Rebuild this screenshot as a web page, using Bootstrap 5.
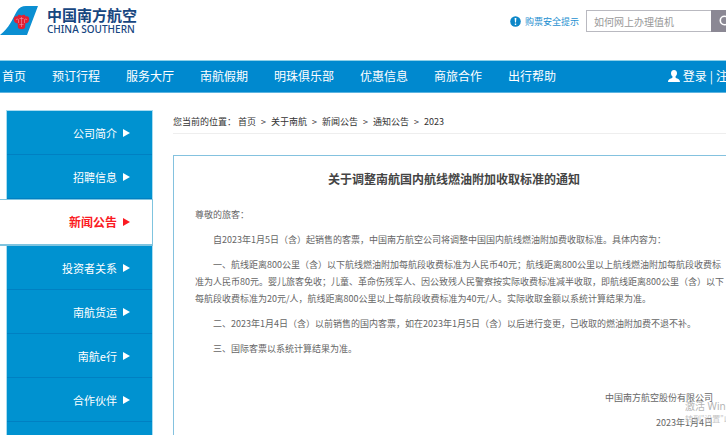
<!DOCTYPE html>
<html lang="zh-CN">
<head>
<meta charset="utf-8">
<meta name="viewport" content="width=device-width, initial-scale=1">
<title>中国南方航空 - 通知公告</title>
<link href="https://cdn.jsdelivr.net/npm/bootstrap@5.3.0/dist/css/bootstrap.min.css" rel="stylesheet">
<style>
  body { font-family: "Noto Sans CJK SC", sans-serif; font-size: 9px; line-height: 17px; color: #666; background: #fff; }
  .page-shell { min-height: 100vh; }
  a { text-decoration: none; }
  .site-head { height: 60px; }
  .brand-link { color: #16467f; padding-top: 6px; gap: 9px; }
  .brand-cn { font-size: 15px; line-height: 18px; font-weight: 700; }
  .brand-en { font-family: "Noto Sans", sans-serif; font-size: 10px; line-height: 11px; font-weight: 500; }
  .safe-tip { color: #1c8fd0; gap: 4px; margin-right: 7px; }
  .head-tools { padding-top: 10px; margin-right: -12px; }
  .search-box { width: 125px; height: 22px; border: 1px solid #b9b9c0; border-right: 0; padding: 0 7px; font-size: 10px; color: #777; }
  .search-box::placeholder { color: #999; }
  .search-btn { width: 27px; height: 22px; background: #8b8894; border: 0; }
  .main-nav { height: 33px; background: #0089cf; border-top: 1px solid #8fd0e8; border-bottom: 1px solid #5db4e0; font-size: 12px; line-height: 16px; padding: 0 0 2px 2px; gap: 26px; }
  .main-nav a { color: #fff; }
  .account { gap: 3px; margin-right: -14px; }
  .body-row { padding-top: 17px; flex: 1; }
  .side-menu { width: 153px; padding-left: 6px; margin-right: 20px; }
  .side-menu a { height: 44px; padding-right: 22px; gap: 6px; background: #0092d0; color: #fff; font-family: "Noto Sans", "Noto Sans CJK SC", sans-serif; font-size: 11px; border: 1px solid #a9dcf0; border-width: 0 1px; box-shadow: inset 0 -1px #0080c2; }
  .side-menu a:first-child { height: 45px; border-top-width: 1px; }
  .side-menu .current { height: 47px; margin-left: -7px; background: #fff; color: #fb1a22; font-size: 12px; font-weight: 700; border: 1px solid #7fc4df; border-width: 1px 1px 2px; box-shadow: none; }
  .side-rest { background: #0092d0; border: 1px solid #a9dcf0; border-width: 0 1px; }
  .trail { color: #333; padding: 3px 0 3px; border-bottom: 1px solid #eee; gap: 5px; }
  .trail a { color: #333; }
  .trail-label { margin-right: -3px; }
  .notice { flex: 1; margin-top: 21px; border: 1px solid #84c2df; border-width: 1px 0 0 1px; padding: 14px 0 0 21px; }
  .notice h1 { font-size: 12px; line-height: 18px; font-weight: 700; color: #444; margin: 0 13px 18px 0; }
  .notice p { margin: 0 0 8px; }
  .para { text-indent: 18px; }
  .sign { padding: 24px 13px 0 0; }
  .os-note { right: 0; bottom: 10px; width: 41px; height: 25px; color: #b5b5b5; font-family: "Noto Sans", "Noto Sans CJK SC", sans-serif; font-size: 10px; line-height: 13px; white-space: nowrap; }
  .os-note small { font-size: 8px; line-height: 11px; color: #c4c4c4; }
</style>
<script src="https://cdn.jsdelivr.net/npm/bootstrap@5.3.0/dist/js/bootstrap.bundle.min.js"></script>
</head>
<body>
<div class="page-shell d-flex flex-column overflow-hidden position-relative">
  <header class="site-head d-flex justify-content-between align-items-start">
    <a class="brand-link d-flex" href="#">
      <svg width="38" height="30" viewBox="0 0 38 30" aria-hidden="true">
        <path d="M0 29C9 22 12 14 17 5Q20 0 26 0H38L27 29Z" fill="#0b8fd2"/>
        <path d="M14 14.500C13 11 15.500 9.500 17.500 10.500C17.500 8.500 19.500 8 21.500 9.500C23.500 8 25.500 8.500 25.500 10.500C27.500 9.500 30 11 29 14.500C28.500 17 26.500 17.500 25.500 17L25 22Q21.500 24.500 18 22L17.500 17C16.500 17.500 14.500 17 14 14.500Z" fill="#e41f32"/>
        <path d="M16 14Q16.500 12 18.500 13.500V17M27 14Q26.500 12 24.500 13.500V17M21.500 11V21M19.500 12.500H23.500M19.500 18.500H23.500" fill="none" stroke="#e9a0b0" stroke-width=".6"/>
      </svg>
      <span class="d-flex flex-column"><span class="brand-cn">中国南方航空</span><span class="brand-en">CHINA SOUTHERN</span></span>
    </a>
    <form class="head-tools d-flex align-items-center">
      <a class="safe-tip d-flex align-items-center" href="#">
        <svg width="11" height="11" viewBox="0 0 11 11" aria-hidden="true"><circle cx="5.500" cy="5.500" r="5.300" fill="#0d87c8"/><path d="M4.600 2H6.400L6 6.500H5ZM4.800 7.500H6.200V9H4.800Z" fill="#fff"/></svg>
        购票安全提示</a>
      <input class="search-box" type="text" placeholder="如何网上办理值机" aria-label="搜索">
      <button class="search-btn p-0 ps-2 text-start d-flex align-items-center" type="button" aria-label="搜索按钮">
        <svg width="13" height="13" viewBox="0 0 13 13" fill="none" stroke="#fff" stroke-width="1.600" aria-hidden="true"><circle cx="5.500" cy="5.500" r="4.200"/><path d="M8.500 8.500L12 12"/></svg>
      </button>
    </form>
  </header>

  <nav class="main-nav d-flex align-items-center text-nowrap">
    <a href="#">首页</a><a href="#">预订行程</a><a href="#">服务大厅</a><a href="#">南航假期</a><a href="#">明珠俱乐部</a><a href="#">优惠信息</a><a href="#">商旅合作</a><a href="#">出行帮助</a>
    <div class="account d-flex align-items-center ms-auto text-white">
      <svg width="12" height="12" viewBox="0 0 12 12" fill="#fff" aria-hidden="true"><path d="M6 0C8 0 9 1.500 9 3.300S8 6 7.500 6.600V7.500C8 8.500 12 8.500 12 12H0C0 8.500 4 8.500 4.500 7.500V6.600C4 6 3 5.200 3 3.300S4 0 6 0Z"/></svg>
      <a href="#">登录</a><span>|</span><a href="#">注册</a>
    </div>
  </nav>

  <div class="body-row d-flex">
    <aside class="side-menu d-flex flex-column flex-shrink-0">
      <a class="d-flex align-items-center justify-content-end" href="#">公司简介<svg width="7" height="8" viewBox="0 0 7 8" fill="currentColor" aria-hidden="true"><path d="M0 0L7 4L0 8Z"/></svg></a>
      <a class="d-flex align-items-center justify-content-end" href="#">招聘信息<svg width="7" height="8" viewBox="0 0 7 8" fill="currentColor" aria-hidden="true"><path d="M0 0L7 4L0 8Z"/></svg></a>
      <a class="current d-flex align-items-center justify-content-end" href="#">新闻公告<svg width="7" height="8" viewBox="0 0 7 8" fill="currentColor" aria-hidden="true"><path d="M0 0L7 4L0 8Z"/></svg></a>
      <a class="d-flex align-items-center justify-content-end" href="#">投资者关系<svg width="7" height="8" viewBox="0 0 7 8" fill="currentColor" aria-hidden="true"><path d="M0 0L7 4L0 8Z"/></svg></a>
      <a class="d-flex align-items-center justify-content-end" href="#">南航货运<svg width="7" height="8" viewBox="0 0 7 8" fill="currentColor" aria-hidden="true"><path d="M0 0L7 4L0 8Z"/></svg></a>
      <a class="d-flex align-items-center justify-content-end" href="#">南航e行<svg width="7" height="8" viewBox="0 0 7 8" fill="currentColor" aria-hidden="true"><path d="M0 0L7 4L0 8Z"/></svg></a>
      <a class="d-flex align-items-center justify-content-end" href="#">合作伙伴<svg width="7" height="8" viewBox="0 0 7 8" fill="currentColor" aria-hidden="true"><path d="M0 0L7 4L0 8Z"/></svg></a>
      <div class="side-rest flex-fill"></div>
    </aside>

    <main class="flex-fill d-flex flex-column">
      <nav class="trail d-flex" aria-label="当前位置">
        <span class="trail-label">您当前的位置：</span>
        <a href="#">首页</a><span>&gt;</span><a href="#">关于南航</a><span>&gt;</span><a href="#">新闻公告</a><span>&gt;</span><a href="#">通知公告</a><span>&gt;</span><a href="#">2023</a>
      </nav>
      <article class="notice">
        <h1 class="text-center">关于调整南航国内航线燃油附加收取标准的通知</h1>
        <p>尊敬的旅客：</p>
        <p class="para">自2023年1月5日（含）起销售的客票，中国南方航空公司将调整中国国内航线燃油附加费收取标准。具体内容为：</p>
        <p class="para">一、航线距离800公里（含）以下航线燃油附加每航段收费标准为人民币40元；航线距离800公里以上航线燃油附加每航段收费标准为人民币80元。婴儿旅客免收；儿童、革命伤残军人、因公致残人民警察按实际收费标准减半收取，即航线距离800公里（含）以下每航段收费标准为20元/人，航线距离800公里以上每航段收费标准为40元/人。实际收取金额以系统计算结果为准。</p>
        <p class="para">二、2023年1月4日（含）以前销售的国内客票，如在2023年1月5日（含）以后进行变更，已收取的燃油附加费不退不补。</p>
        <p class="para">三、国际客票以系统计算结果为准。</p>
        <div class="sign text-end">
          <p>中国南方航空股份有限公司</p>
          <p class="mb-0">2023年1月4日</p>
        </div>
      </article>
    </main>
  </div>

  <div class="os-note position-absolute overflow-hidden d-flex flex-column"><span>激活 Windows</span><small>转到"设置"以激活 Windows</small></div>
</div>
</body>
</html>
